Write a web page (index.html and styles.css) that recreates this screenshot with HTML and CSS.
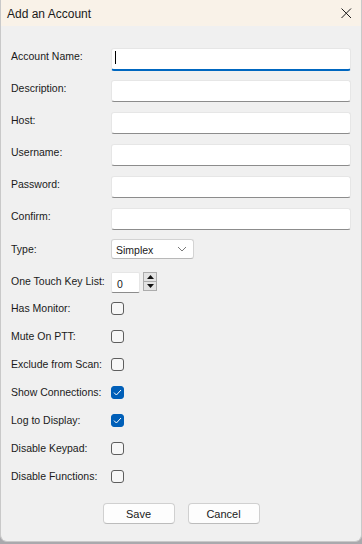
FILE: index.html
```html
<!DOCTYPE html>
<html>
<head>
<meta charset="utf-8">
<link rel="stylesheet" href="styles.css">
</head>
<body>
<div class="window">
  <div class="titlebar">
    <span class="title">Add an Account</span>
    <svg class="close" width="12" height="12" viewBox="0 0 12 12"><path d="M1.5 1.5 L11 11 M11 1.5 L1.5 11" stroke="#1b1b1b" stroke-width="1" fill="none"/></svg>
  </div>
  <div class="form">
    <div class="row text-row">
      <label class="lbl">Account Name:</label>
      <div class="input focused"><span class="caret"></span></div>
    </div>
    <div class="row text-row">
      <label class="lbl">Description:</label>
      <div class="input"></div>
    </div>
    <div class="row text-row">
      <label class="lbl">Host:</label>
      <div class="input"></div>
    </div>
    <div class="row text-row">
      <label class="lbl">Username:</label>
      <div class="input"></div>
    </div>
    <div class="row text-row">
      <label class="lbl">Password:</label>
      <div class="input"></div>
    </div>
    <div class="row text-row">
      <label class="lbl">Confirm:</label>
      <div class="input"></div>
    </div>
    <div class="row type-row">
      <label class="lbl">Type:</label>
      <div class="select">
        <span>Simplex</span>
        <svg class="chev" width="10" height="6" viewBox="0 0 10 6"><path d="M1 1 L5 5 L9 1" stroke="#7a7a7a" stroke-width="1" fill="none"/></svg>
      </div>
    </div>
    <div class="row spin-row">
      <label class="lbl">One Touch Key List:</label>
      <div class="spin-input">0</div>
      <div class="spin-btns">
        <div class="spin-btn"><svg width="7" height="4" viewBox="0 0 7 4"><path d="M0 4 L3.5 0 L7 4 Z" fill="#111"/></svg></div>
        <div class="spin-btn"><svg width="7" height="4" viewBox="0 0 7 4"><path d="M0 0 L3.5 4 L7 0 Z" fill="#111"/></svg></div>
      </div>
    </div>
    <div class="checks">
      <div class="row check-row"><label class="lbl">Has Monitor:</label><span class="cb"></span></div>
      <div class="row check-row"><label class="lbl">Mute On PTT:</label><span class="cb"></span></div>
      <div class="row check-row"><label class="lbl">Exclude from Scan:</label><span class="cb"></span></div>
      <div class="row check-row"><label class="lbl">Show Connections:</label><span class="cb checked"><svg width="9" height="7" viewBox="0 0 9 7"><path d="M1 3.6 L3.4 6 L8 1" stroke="#fff" stroke-width="1" fill="none"/></svg></span></div>
      <div class="row check-row"><label class="lbl">Log to Display:</label><span class="cb checked"><svg width="9" height="7" viewBox="0 0 9 7"><path d="M1 3.6 L3.4 6 L8 1" stroke="#fff" stroke-width="1" fill="none"/></svg></span></div>
      <div class="row check-row"><label class="lbl">Disable Keypad:</label><span class="cb"></span></div>
      <div class="row check-row"><label class="lbl">Disable Functions:</label><span class="cb"></span></div>
    </div>
    <div class="buttons">
      <button class="btn">Save</button>
      <button class="btn">Cancel</button>
    </div>
  </div>
</div>
</body>
</html>
```

FILE: styles.css
```css
html, body {
  margin: 0;
  padding: 0;
  background: #a9a9ad;
  width: 362px;
  height: 544px;
  overflow: hidden;
}
body {
  font-family: "Liberation Sans", Arial, sans-serif;
  font-size: 10.5px;
  color: #1a1a1a;
}
.window {
  width: 360px;
  height: 541px;
  background: #f0f0f0;
  border: 1px solid #c9c9c9;
  border-top: none;
  border-radius: 0 0 7px 7px;
  overflow: hidden;
  display: flex;
  flex-direction: column;
}
.titlebar {
  height: 26px;
  background: #f9f2e8;
  display: flex;
  align-items: center;
  justify-content: space-between;
  padding: 0 9px 0 6px;
  flex-shrink: 0;
}
.title {
  font-size: 12px;
  color: #1a1a1a;
  line-height: 16px;
  margin-top: 1px;
}
.form {
  padding: 22px 0 0 10px;
  display: flex;
  flex-direction: column;
}
.row {
  display: flex;
}
.lbl {
  width: 100px;
  flex-shrink: 0;
  line-height: 16px;
  white-space: nowrap;
}
.text-row {
  height: 22px;
  margin-bottom: 10px;
  align-items: flex-start;
}
.input {
  width: 240px;
  height: 22px;
  box-sizing: border-box;
  background: #fff;
  border: 1px solid #e6e6e6;
  border-bottom: 1px solid #8c8c8c;
  border-radius: 3px;
  position: relative;
}
.input.focused {
  border-bottom: 2px solid #0067c0;
  height: 23px;
}
.caret {
  position: absolute;
  left: 3px;
  top: 2px;
  width: 1px;
  height: 13px;
  background: #000;
}
.type-row {
  height: 20px;
  margin-top: -1px;
  align-items: center;
}
.select {
  width: 83px;
  height: 20px;
  box-sizing: border-box;
  background: #fff;
  border: 1px solid #d3d3d3;
  border-bottom-color: #b8b8b8;
  border-radius: 3px;
  display: flex;
  align-items: center;
  justify-content: space-between;
  padding: 1px 6px 0 4px;
}
.chev {
  margin-top: -1px;
}
.spin-row {
  height: 20px;
  margin-top: 13px;
  align-items: flex-start;
}
.spin-row .lbl {
  padding-top: 1px;
}
.spin-input {
  width: 29px;
  height: 21px;
  box-sizing: border-box;
  background: #fff;
  border: 1px solid #e6e6e6;
  border-bottom: 1px solid #8c8c8c;
  border-radius: 2px;
  padding: 4px 0 0 5px;
  line-height: 14px;
}
.spin-btns {
  margin-left: 3px;
  width: 14px;
  display: flex;
  flex-direction: column;
}
.spin-btn {
  height: 10px;
  box-sizing: border-box;
  background: #e3e3e3;
  border: 1px solid #acacac;
  display: flex;
  align-items: center;
  justify-content: center;
}
.spin-btn + .spin-btn {
  border-top: none;
  height: 9px;
}
.checks {
  margin-top: 6px;
  display: flex;
  flex-direction: column;
  gap: 8px;
}
.check-row {
  height: 20px;
  align-items: center;
}
.check-row .lbl {
  margin-top: -1px;
}
.cb {
  width: 13px;
  height: 13px;
  box-sizing: border-box;
  border: 1px solid #5e5e5e;
  border-radius: 3px;
  background: #f7f7f7;
  display: flex;
  align-items: center;
  justify-content: center;
}
.cb.checked {
  background: #005fb8;
  border-color: #005fb8;
}
.buttons {
  margin-top: 17px;
  display: flex;
  justify-content: center;
  gap: 13px;
  padding-right: 10px;
}
.btn {
  width: 72px;
  height: 21px;
  box-sizing: border-box;
  background: #fdfdfd;
  border: 1px solid #d0d0d0;
  border-bottom-color: #bcbcbc;
  border-radius: 4px;
  font-family: "Liberation Sans", Arial, sans-serif;
  font-size: 11px;
  color: #1a1a1a;
  padding: 0;
}
```
